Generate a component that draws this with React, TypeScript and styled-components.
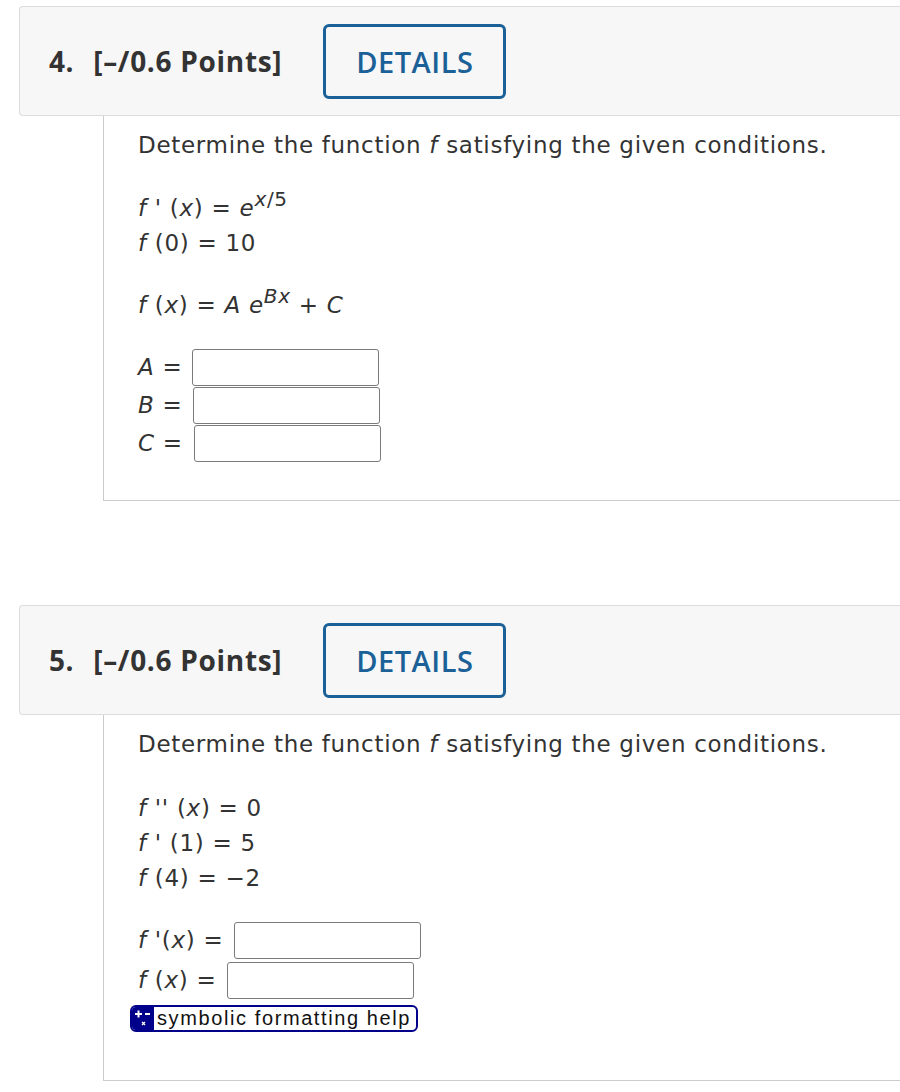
import styled, { createGlobalStyle } from "styled-components";

const GlobalStyle = createGlobalStyle`
  html, body {
    margin: 0;
    padding: 0;
    background: #ffffff;
    overflow-x: hidden;
  }
`;

const Page = styled.div`
  padding: 6px 0 0 19px;
  display: flex;
  flex-direction: column;
`;

const Question = styled.section<{ $gap?: number }>`
  display: flex;
  flex-direction: column;
  margin-bottom: ${(p) => p.$gap ?? 0}px;
`;

const Header = styled.div`
  height: 108px;
  display: flex;
  align-items: center;
  background: #f7f7f7;
  border: 1px solid #dcdcdc;
  border-right: none;
  border-radius: 4px 0 0 4px;
  padding-left: 29px;
  font-family: "Open Sans", "DejaVu Sans", sans-serif;
  color: #333333;
`;

const Number = styled.span`
  font-size: 28px;
  font-weight: 700;
  letter-spacing: 0.6px;
  margin-right: 19px;
`;

const Points = styled.span`
  font-size: 28px;
  font-weight: 700;
  letter-spacing: 0.7px;
  margin-right: 41px;
`;

const DetailsButton = styled.button`
  width: 183px;
  height: 75px;
  border: 3px solid #1b6197;
  border-radius: 6px;
  background: transparent;
  color: #1b6197;
  font-family: "Open Sans", "DejaVu Sans", sans-serif;
  font-size: 29px;
  font-weight: 600;
  letter-spacing: 0.5px;
  padding: 0;
  margin-top: 1px;
`;

const Body = styled.div<{ $height: number }>`
  margin-left: 84px;
  height: ${(p) => p.$height}px;
  border-left: 1px solid #cccccc;
  border-bottom: 1px solid #cccccc;
  padding: 13px 0 0 34px;
  font-family: "DejaVu Sans", Verdana, sans-serif;
  font-size: 23px;
  letter-spacing: 0.7px;
  color: #333333;
`;

const Prompt = styled.p`
  margin: 0 0 28px;
  line-height: 32px;
`;

const Lines = styled.div<{ $gap?: number; $pt?: number }>`
  display: flex;
  flex-direction: column;
  padding-top: ${(p) => p.$pt ?? 0}px;
  margin-bottom: ${(p) => p.$gap ?? 0}px;
`;

const Line = styled.div<{ $h?: number }>`
  height: ${(p) => p.$h ?? 35}px;
  line-height: ${(p) => p.$h ?? 35}px;
  white-space: pre;
`;

const I = styled.i`
  font-style: italic;
`;

const Sup = styled.sup`
  font-size: 20px;
  vertical-align: 10px;
  line-height: 0;
`;

const Field = styled.div<{ $h?: number }>`
  display: flex;
  align-items: center;
  height: ${(p) => p.$h ?? 38}px;
  white-space: pre;
`;

const Input = styled.input<{ $w?: number; $ml?: number }>`
  box-sizing: border-box;
  width: ${(p) => p.$w ?? 187}px;
  height: 37px;
  margin-left: ${(p) => p.$ml ?? 10}px;
  border: 1px solid #7a7a7a;
  border-radius: 3px;
  background: #ffffff;
  padding: 0;
`;

const Help = styled.div`
  display: flex;
  width: 288px;
  height: 27px;
  margin-left: -8px;
  margin-top: 5px;
  box-sizing: border-box;
  border: 2px solid #00008b;
  border-radius: 6px;
  overflow: hidden;
  background: #ffffff;
`;

const HelpIcon = styled.div`
  width: 22px;
  background: #00008b;
  display: flex;
  align-items: center;
  justify-content: center;
`;

const HelpText = styled.span`
  font-family: "Liberation Sans", Arial, sans-serif;
  font-size: 20px;
  line-height: 23px;
  color: #111111;
  padding-left: 3px;
  letter-spacing: 1.6px;
  white-space: nowrap;
`;

function App() {
  return (
    <Page>
      <GlobalStyle />
      <Question $gap={104}>
        <Header>
          <Number>4.</Number>
          <Points>[–/0.6 Points]</Points>
          <DetailsButton>DETAILS</DetailsButton>
        </Header>
        <Body $height={371}>
          <Prompt>
            Determine the function <I>f</I> satisfying the given conditions.
          </Prompt>
          <Lines $gap={26}>
            <Line $h={38}>
              <I>f</I> ' (<I>x</I>) = <I>e</I>
              <Sup>
                <I>x</I>/5
              </Sup>
            </Line>
            <Line $h={32}>
              <I>f</I> (0) = 10
            </Line>
          </Lines>
          <Lines $gap={23}>
            <Line $h={40}>
              <I>f</I> (<I>x</I>) = <I>A</I> <I>e</I>
              <Sup>
                <I>Bx</I>
              </Sup>{" "}
              + <I>C</I>
            </Line>
          </Lines>
          <Field>
            <I>A</I> =<Input />
          </Field>
          <Field>
            <I>B</I> =<Input $ml={11} />
          </Field>
          <Field>
            <I>C</I> =<Input $ml={11} />
          </Field>
        </Body>
      </Question>
      <Question>
        <Header>
          <Number>5.</Number>
          <Points>[–/0.6 Points]</Points>
          <DetailsButton>DETAILS</DetailsButton>
        </Header>
        <Body $height={352}>
          <Prompt>
            Determine the function <I>f</I> satisfying the given conditions.
          </Prompt>
          <Lines $gap={24} $pt={3}>
            <Line>
              <I>f</I> '' (<I>x</I>) = 0
            </Line>
            <Line>
              <I>f</I> ' (1) = 5
            </Line>
            <Line>
              <I>f</I> (4) = −2
            </Line>
          </Lines>
          <Field $h={40}>
            <I>f</I> '(<I>x</I>) =<Input />
          </Field>
          <Field $h={40}>
            <I>f</I> (<I>x</I>) =<Input $ml={11} />
          </Field>
          <Help>
            <HelpIcon>
              <svg width="20" height="23" viewBox="0 0 20 23">
                <path d="M2 7h7M5.5 3.5v7" stroke="#ffffff" strokeWidth="2" />
                <path d="M12 7h5" stroke="#ffffff" strokeWidth="2" />
                <path d="M9 15l3 3M12 15l-3 3" stroke="#ffffff" strokeWidth="1.3" />
              </svg>
            </HelpIcon>
            <HelpText>symbolic formatting help</HelpText>
          </Help>
        </Body>
      </Question>
    </Page>
  );
}

export default App;
